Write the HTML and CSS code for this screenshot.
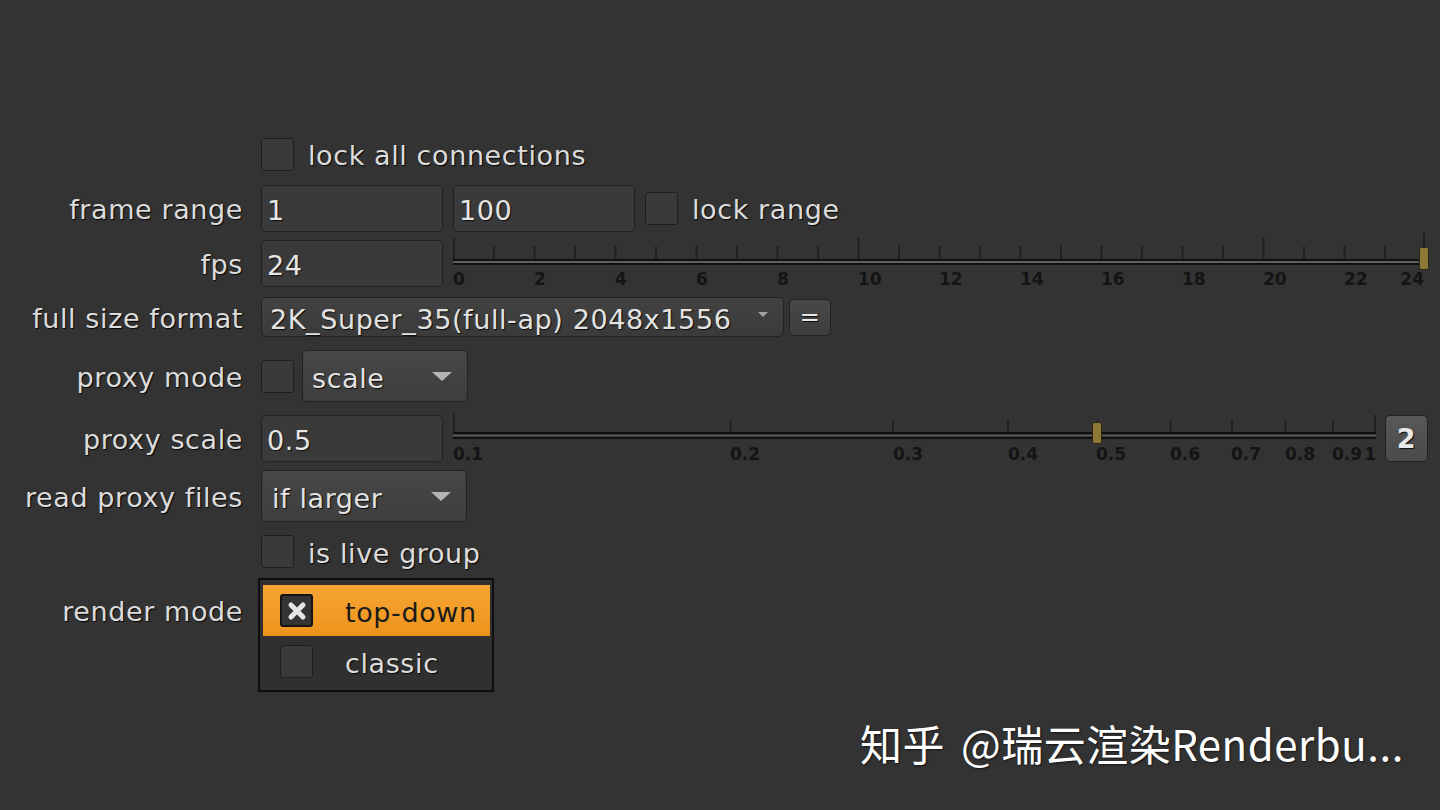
FILE: index.html
```html
<!DOCTYPE html>
<html>
<head>
<meta charset="utf-8">
<link rel="stylesheet" href="styles.css">
</head>
<body>
<div class="panel">
  <div class="row r1">
    <div class="label"></div>
    <div class="controls">
      <span class="check"></span><span class="text">lock all connections</span>
    </div>
  </div>

  <div class="row r2">
    <div class="label">frame range</div>
    <div class="controls">
      <div class="field">1</div>
      <div class="field gap10">100</div>
      <span class="check gap10"></span><span class="text">lock range</span>
    </div>
  </div>

  <div class="row r3">
    <div class="label">fps</div>
    <div class="controls">
      <div class="field">24</div>
      <svg class="slider gap10" width="980" height="48" viewBox="0 0 980 48">
        <g stroke="#1d1d1d" stroke-width="1.6">
          <line x1="1" y1="-1" x2="1" y2="20"/>
          <line x1="41" y1="7" x2="41" y2="20"/>
          <line x1="81.5" y1="7" x2="81.5" y2="20"/>
          <line x1="122" y1="7" x2="122" y2="20"/>
          <line x1="162.5" y1="7" x2="162.5" y2="20"/>
          <line x1="203" y1="7" x2="203" y2="20"/>
          <line x1="243.5" y1="7" x2="243.5" y2="20"/>
          <line x1="284" y1="7" x2="284" y2="20"/>
          <line x1="324.5" y1="7" x2="324.5" y2="20"/>
          <line x1="365" y1="7" x2="365" y2="20"/>
          <line x1="405.5" y1="-1" x2="405.5" y2="20"/>
          <line x1="446" y1="7" x2="446" y2="20"/>
          <line x1="486.5" y1="7" x2="486.5" y2="20"/>
          <line x1="527" y1="7" x2="527" y2="20"/>
          <line x1="567.5" y1="7" x2="567.5" y2="20"/>
          <line x1="608" y1="7" x2="608" y2="20"/>
          <line x1="648.5" y1="7" x2="648.5" y2="20"/>
          <line x1="689" y1="7" x2="689" y2="20"/>
          <line x1="729.5" y1="7" x2="729.5" y2="20"/>
          <line x1="770" y1="7" x2="770" y2="20"/>
          <line x1="810.5" y1="-1" x2="810.5" y2="20"/>
          <line x1="851" y1="7" x2="851" y2="20"/>
          <line x1="891.5" y1="7" x2="891.5" y2="20"/>
          <line x1="932" y1="7" x2="932" y2="20"/>
          <line x1="971" y1="-6" x2="971" y2="20"/>
        </g>
        <rect x="0" y="20" width="972" height="6" fill="#101010"/>
        <rect x="0" y="22" width="972" height="2" fill="#5e5e5e"/>
        <g class="ticklabel">
          <text x="0" y="46">0</text>
          <text x="81" y="46">2</text>
          <text x="162" y="46">4</text>
          <text x="243" y="46">6</text>
          <text x="324" y="46">8</text>
          <text x="405" y="46">10</text>
          <text x="486" y="46">12</text>
          <text x="567" y="46">14</text>
          <text x="648" y="46">16</text>
          <text x="729" y="46">18</text>
          <text x="810" y="46">20</text>
          <text x="891" y="46">22</text>
          <text x="971" y="46" text-anchor="end">24</text>
        </g>
        <rect x="966.5" y="8.5" width="9" height="22" rx="2" fill="#8d7838" stroke="#2b2410"/>
      </svg>
    </div>
  </div>

  <div class="row r4">
    <div class="label">full size format</div>
    <div class="controls">
      <div class="dropdown wide"><span class="val">2K_Super_35(full-ap) 2048x1556</span><span class="arrow small"></span></div>
      <div class="btn eq">=</div>
    </div>
  </div>

  <div class="row r5">
    <div class="label">proxy mode</div>
    <div class="controls">
      <span class="check"></span>
      <div class="dropdown mode"><span class="val">scale</span><span class="arrow"></span></div>
    </div>
  </div>

  <div class="row r6">
    <div class="label">proxy scale</div>
    <div class="controls">
      <div class="field">0.5</div>
      <svg class="slider gap10" width="924" height="48" viewBox="0 0 924 48">
        <g stroke="#1d1d1d" stroke-width="1.6">
          <line x1="1" y1="-1" x2="1" y2="18"/>
          <line x1="277.5" y1="6" x2="277.5" y2="18"/>
          <line x1="440" y1="6" x2="440" y2="18"/>
          <line x1="555" y1="6" x2="555" y2="18"/>
          <line x1="644.5" y1="6" x2="644.5" y2="18"/>
          <line x1="717.5" y1="6" x2="717.5" y2="18"/>
          <line x1="779" y1="6" x2="779" y2="18"/>
          <line x1="832.5" y1="6" x2="832.5" y2="18"/>
          <line x1="880" y1="6" x2="880" y2="18"/>
          <line x1="922" y1="1" x2="922" y2="18"/>
        </g>
        <rect x="0" y="18" width="923" height="7" fill="#101010"/>
        <rect x="0" y="20.5" width="923" height="2" fill="#5e5e5e"/>
        <g class="ticklabel">
          <text x="0" y="46">0.1</text>
          <text x="277" y="46">0.2</text>
          <text x="440" y="46">0.3</text>
          <text x="555" y="46">0.4</text>
          <text x="643" y="46">0.5</text>
          <text x="717" y="46">0.6</text>
          <text x="778" y="46">0.7</text>
          <text x="832" y="46">0.8</text>
          <text x="879" y="46">0.9</text>
          <text x="923" y="46" text-anchor="end">1</text>
        </g>
        <rect x="639.5" y="8.5" width="9" height="21" rx="2" fill="#8d7838" stroke="#2b2410"/>
      </svg>
      <div class="btn two">2</div>
    </div>
  </div>

  <div class="row r7">
    <div class="label">read proxy files</div>
    <div class="controls">
      <div class="dropdown files"><span class="val">if larger</span><span class="arrow"></span></div>
    </div>
  </div>

  <div class="row r8">
    <div class="label"></div>
    <div class="controls">
      <span class="check"></span><span class="text">is live group</span>
    </div>
  </div>

  <div class="row r9">
    <div class="label">render mode</div>
    <div class="popup">
      <div class="opt sel">
        <span class="check on"><svg width="20" height="20" viewBox="0 0 20 20"><path d="M4 4 L16 16 M16 4 L4 16" stroke="#e6e6e6" stroke-width="5" stroke-linecap="round"/></svg></span>
        <span class="val">top-down</span>
      </div>
      <div class="opt">
        <span class="check"></span>
        <span class="val">classic</span>
      </div>
    </div>
  </div>
</div>

<div class="watermark">知乎 @瑞云渲染Renderbu...</div>
</body>
</html>
```

FILE: styles.css
```css
* {
  box-sizing: border-box;
}

html,
body {
  margin: 0;
  padding: 0;
}

body {
  width: 1440px;
  height: 810px;
  overflow: hidden;
  position: relative;
  background: #333333;
  color: #dcdcdc;
  font-family: "DejaVu Sans", Verdana, sans-serif;
  font-size: 27px;
  letter-spacing: 0.6px;
}

.panel {
  display: flex;
  flex-direction: column;
  padding-top: 137px;
}

.row {
  display: flex;
  align-items: center;
}

.r1 { height: 34px; }
.r2 { height: 48px; margin-top: 13px; }
.r3 { height: 48px; margin-top: 7px; }
.r4 { height: 40px; margin-top: 10px; }
.r5 { height: 52px; margin-top: 13px; }
.r6 { height: 48px; margin-top: 12px; }
.r7 { height: 52px; margin-top: 8px; }
.r8 { height: 33px; margin-top: 13px; }
.r9 { height: 114px; margin-top: 10px; align-items: flex-start; }

.label {
  flex: none;
  width: 243px;
  margin-right: 18px;
  padding-top: 4px;
  text-align: right;
  line-height: 34px;
  white-space: nowrap;
  color: #dcdcdc;
  text-shadow: 1px 1px 1px rgba(0, 0, 0, 0.9);
}

.r9 .label {
  margin-top: 13px;
}

.controls {
  display: flex;
  align-items: center;
  height: 100%;
}

.text {
  margin-left: 14px;
  padding-top: 4px;
  line-height: 34px;
  white-space: nowrap;
  text-shadow: 1px 1px 1px rgba(0, 0, 0, 0.9);
}

.val {
  padding-top: 4px;
}

.gap10 {
  margin-left: 10px;
}

.check {
  flex: none;
  display: flex;
  align-items: center;
  justify-content: center;
  width: 33px;
  height: 33px;
  background: #3a3a3a;
  border: 1.5px solid #1f1f1f;
  border-radius: 3px;
}

.field {
  flex: none;
  width: 182px;
  height: 47px;
  display: flex;
  align-items: center;
  padding-left: 5px;
  padding-top: 4px;
  background: #3a3a3a;
  border: 1.5px solid #232323;
  border-radius: 5px;
  color: #e6e6e6;
  text-shadow: 1px 1px 1px rgba(0, 0, 0, 0.75);
}

.slider {
  flex: none;
  display: block;
  overflow: visible;
}

.ticklabel text {
  font-family: "DejaVu Sans", Verdana, sans-serif;
  font-weight: bold;
  font-size: 17px;
  letter-spacing: 0;
  fill: #141414;
}

.dropdown {
  flex: none;
  display: flex;
  align-items: center;
  justify-content: space-between;
  background: linear-gradient(#474747, #3e3e3e);
  border: 1.5px solid #222222;
  border-radius: 5px;
  color: #e2e2e2;
  white-space: nowrap;
  text-shadow: 1px 1px 1px rgba(0, 0, 0, 0.85);
}

.dropdown.wide {
  width: 523px;
  height: 40px;
  padding: 0 15px 0 8px;
  background: linear-gradient(#424242, #3a3a3a);
}

.dropdown.mode {
  width: 166px;
  height: 52px;
  margin-left: 8px;
  padding: 0 15px 0 9px;
}

.dropdown.files {
  width: 206px;
  height: 52px;
  padding: 0 15px 0 10px;
}

.arrow {
  width: 0;
  height: 0;
  border-left: 10px solid transparent;
  border-right: 10px solid transparent;
  border-top: 9px solid #b4b4b4;
}

.arrow.small {
  border-left-width: 5px;
  border-right-width: 5px;
  border-top-width: 5px;
  border-top-color: #a0a0a0;
  margin-top: -6px;
}

.btn {
  flex: none;
  display: flex;
  align-items: center;
  justify-content: center;
  border: 1.5px solid #222222;
  border-radius: 5px;
  color: #e8e8e8;
  text-shadow: 1px 1px 1px rgba(0, 0, 0, 0.8);
}

.btn.eq {
  width: 42px;
  height: 37px;
  margin-left: 5px;
  background: linear-gradient(#484848, #3e3e3e);
  font-size: 24px;
}

.btn.two {
  width: 43px;
  height: 47px;
  margin-left: 8px;
  background: linear-gradient(#585858, #4a4a4a);
  font-weight: bold;
  font-size: 27px;
}

.popup {
  flex: none;
  margin-left: -3px;
  width: 236px;
  height: 114px;
  display: flex;
  flex-direction: column;
  padding: 5px 2px 3px 3px;
  background: #303030;
  border: 2px solid #0e0e0e;
}

.opt {
  height: 51px;
  display: flex;
  align-items: center;
  padding-left: 17px;
  white-space: nowrap;
  text-shadow: 1px 1px 1px rgba(0, 0, 0, 0.85);
}

.opt .check {
  margin-right: 32px;
}

.opt.sel {
  background: linear-gradient(#f6a534, #ee931c);
  color: #1b1b1b;
  text-shadow: none;
}

.check.on {
  background: #343434;
  border: 2px solid #141414;
}

.watermark {
  position: absolute;
  left: 860px;
  top: 722px;
  font-family: "Noto Sans CJK SC", "Noto Sans", sans-serif;
  font-size: 42px;
  font-weight: 400;
  line-height: 42px;
  letter-spacing: 0.5px;
  word-spacing: 6px;
  color: #ffffff;
  white-space: nowrap;
  text-shadow: 1px 1px 2px rgba(0, 0, 0, 0.6);
}
```
